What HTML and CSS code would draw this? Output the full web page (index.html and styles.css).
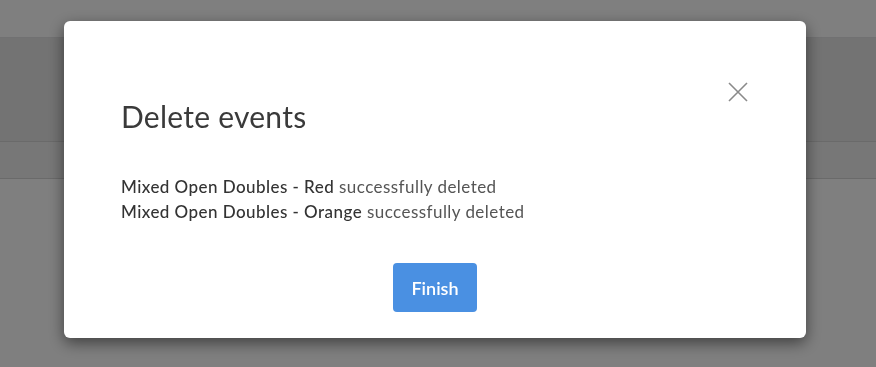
FILE: index.html
```html
<!DOCTYPE html>
<html lang="en">
<head>
<meta charset="utf-8">
<title>Delete events</title>
<link rel="stylesheet" href="styles.css">
</head>
<body>
<div class="page">
  <header class="topbar"></header>
  <section class="toolbar"></section>
  <section class="subbar"></section>
  <main class="content"></main>
</div>
<div class="backdrop">
  <div class="modal" role="dialog" aria-labelledby="modal-title">
    <div class="modal-header">
      <h2 class="modal-title" id="modal-title">Delete events</h2>
      <button class="close-btn" aria-label="Close">
        <svg width="20" height="20" viewBox="0 0 20 20"><path d="M1 1 L19 19 M19 1 L1 19" stroke="#8a8a8a" stroke-width="1.6" fill="none"/></svg>
      </button>
    </div>
    <div class="modal-body">
      <p class="result"><span class="event-name">Mixed Open Doubles - Red</span> successfully deleted</p>
      <p class="result"><span class="event-name">Mixed Open Doubles - Orange</span> successfully deleted</p>
    </div>
    <div class="modal-footer">
      <button class="btn-primary">Finish</button>
    </div>
  </div>
</div>
</body>
</html>
```

FILE: styles.css
```css
* { box-sizing: border-box; }
html, body { margin: 0; padding: 0; }
body {
  font-family: Lato, "Open Sans", sans-serif;
  background: #ffffff;
  width: 876px;
  height: 367px;
  overflow: hidden;
}
.page { display: flex; flex-direction: column; height: 367px; }
.topbar { height: 38px; background: #ffffff; border-bottom: 1px solid #e2e2e4; }
.toolbar { height: 104px; background: #e6e6e6; border-bottom: 1px solid #d4d4d4; }
.subbar { height: 37px; background: #eeeeee; border-bottom: 1px solid #d4d4d4; }
.content { flex: 1; background: #ffffff; }

.backdrop {
  position: fixed;
  inset: 0;
  background: rgba(0, 0, 0, 0.5);
  display: flex;
  justify-content: flex-start;
  align-items: flex-start;
  padding: 21px 0 0 64px;
}
.modal {
  width: 742px;
  height: 317px;
  background: #ffffff;
  border-radius: 6px;
  box-shadow: 0 5px 15px rgba(0, 0, 0, 0.5);
  padding: 77px 57px 26px 57px;
  display: flex;
  flex-direction: column;
}
.modal-header {
  display: flex;
  justify-content: space-between;
  align-items: flex-start;
}
.modal-title {
  margin: 0;
  font-size: 30px;
  font-weight: 400;
  letter-spacing: 0.25px;
  color: #3a3a3a;
  line-height: 36px;
}
.close-btn {
  border: 0;
  background: none;
  padding: 0;
  margin: 0 1px 0 0;
  width: 20px;
  height: 20px;
  cursor: pointer;
  display: flex;
  transform: translateY(-16px);
}
.modal-body { margin-top: 40px; }
.result {
  margin: 0;
  font-size: 17px;
  line-height: 25px;
  letter-spacing: 0.45px;
  color: #555555;
}
.event-name { color: #333333; font-weight: 500; }
.modal-footer {
  margin-top: auto;
  display: flex;
  justify-content: center;
}
.btn-primary {
  width: 84px;
  height: 49px;
  border: 0;
  border-radius: 4px;
  background: #4a90e2;
  color: #ffffff;
  font-family: Lato, sans-serif;
  font-size: 18px;
  font-weight: 600;
}
```
